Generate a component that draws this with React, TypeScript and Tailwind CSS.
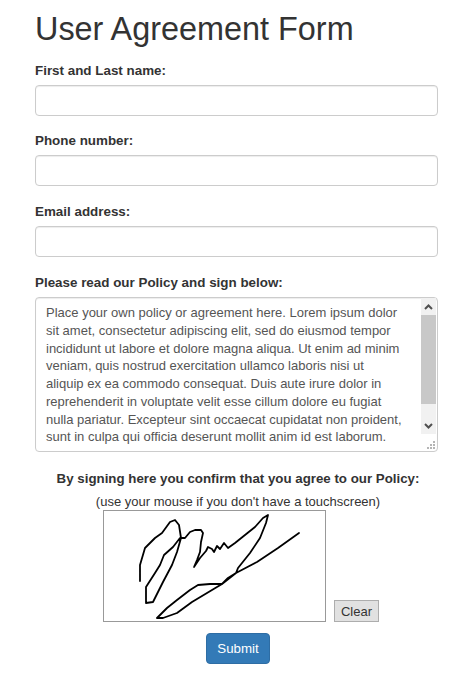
const font = "font-['Liberation_Sans',Arial,sans-serif]";

// signature stroke, in page coordinates
const signature =
  "M140 581 L140 565 L145 548 L155 538 L162 533 L170 522 L175 520 L179 525 L181 538 L177 552 L172 565 L163 582 L153 602 L146 603 L146 587 L155 573 L160 565 L164 555 L173 547 L180 538 L185 538 L190 532 L195 530 L201 530 L203 533 L201 542 L200 552 L197 560 L194 567 L200 558 L206 551 L208 547 L212 549 L214 552 L217 546 L220 549 L224 543 L228 548 L235 543 L245 535 L255 527 L263 518 L268 515 L266 523 L260 538 L250 553 L238 568 L236 573 L228 578 L222 584 L210 584 L198 585 L190 590 L177 600 L167 608 L157 618 L163 618 L177 613 L192 602 L222 584 L236 573 L257 562 L278 548 L299 533";

function Field({ label }: { label: string }) {
  return (
    <div className="mb-[15.4px]">
      <label className="mb-[4px] block text-[13.4px] font-bold leading-[20px]">{label}</label>
      <input
        type="text"
        className="block h-[31px] w-full rounded-[4px] border border-[#ccc] bg-white px-3 shadow-[inset_0_1px_1px_rgba(0,0,0,0.075)]"
      />
    </div>
  );
}

export default function App() {
  return (
    <div className={`${font} min-h-[683px] bg-white pl-[35px] pr-[36px] text-[#333]`}>
      <h1 className="pt-[9px] pb-[12px] text-[32.4px] font-normal leading-[40px]">User Agreement Form</h1>
      <form>
        <Field label="First and Last name:" />
        <Field label="Phone number:" />
        <Field label="Email address:" />

        <label className="mb-[4px] block pt-[1px] text-[13.4px] font-bold leading-[20px]">
          Please read our Policy and sign below:
        </label>
        <div className="relative flex h-[155px] w-full rounded-[4px] border border-[#ccc] bg-white text-[#555] shadow-[inset_0_1px_1px_rgba(0,0,0,0.075)]">
          <p className="flex-1 pl-[10px] pr-[17.5px] pt-[6px] text-[13px] leading-[17.75px]">
            Place your own policy or agreement here. Lorem ipsum dolor sit amet, consectetur adipiscing elit, sed do
            eiusmod tempor incididunt ut labore et dolore magna aliqua. Ut enim ad minim veniam, quis nostrud
            exercitation ullamco laboris nisi ut aliquip ex ea commodo consequat. Duis aute irure dolor in
            reprehenderit in voluptate velit esse cillum dolore eu fugiat nulla pariatur. Excepteur sint occaecat
            cupidatat non proident, sunt in culpa qui officia deserunt mollit anim id est laborum.
          </p>
          <div className="mr-[1px] flex h-[136px] w-[15px] flex-col bg-[#f1f1f1]">
            <div className="flex h-[17px] items-center justify-center">
              <svg width="9" height="6" viewBox="0 0 9 6" fill="none" stroke="#505050" strokeWidth="2">
                <path d="M1 5 L4.5 1.5 L8 5" />
              </svg>
            </div>
            <div className="h-[89px] bg-[#c8c8c8]" />
            <div className="mt-auto flex h-[17px] items-center justify-center">
              <svg width="9" height="6" viewBox="0 0 9 6" fill="none" stroke="#505050" strokeWidth="2">
                <path d="M1 1 L4.5 4.5 L8 1" />
              </svg>
            </div>
          </div>
          <svg className="absolute bottom-[1px] right-[1px]" width="10" height="10" viewBox="0 0 10 10" fill="#b5b5b5">
            <rect x="7" y="1" width="2" height="2" />
            <rect x="4" y="4" width="2" height="2" />
            <rect x="7" y="4" width="2" height="2" />
            <rect x="1" y="7" width="2" height="2" />
            <rect x="4" y="7" width="2" height="2" />
            <rect x="7" y="7" width="2" height="2" />
          </svg>
        </div>

        <div className="mt-[17px] pl-[3px] text-center text-[13.3px] font-bold leading-[20px]">
          By signing here you confirm that you agree to our Policy:
        </div>
        <div className="mt-[4px] pl-[3px] text-center text-[13px] leading-[17px]">
          (use your mouse if you don't have a touchscreen)
        </div>

        <div className="flex items-end pl-[68px]">
          <div className="h-[112px] w-[223px] border border-[#999] bg-white">
            <svg className="block h-full w-full" viewBox="104 511 221 110" fill="none">
              <path d={signature} stroke="#000" strokeWidth="1.8" strokeLinejoin="round" strokeLinecap="round" />
            </svg>
          </div>
          <button
            type="button"
            className="ml-[8px] h-[22px] w-[45px] border border-[#adadad] bg-[#e1e1e1] text-[13px] leading-none text-[#333]"
          >
            Clear
          </button>
        </div>

        <div className="mt-[11px] flex justify-center pl-[3px]">
          <button
            type="submit"
            className="h-[31px] w-[64px] rounded-[4px] border border-[#2e6da4] bg-[#337ab7] text-[13.3px] text-white"
          >
            Submit
          </button>
        </div>
      </form>
    </div>
  );
}
